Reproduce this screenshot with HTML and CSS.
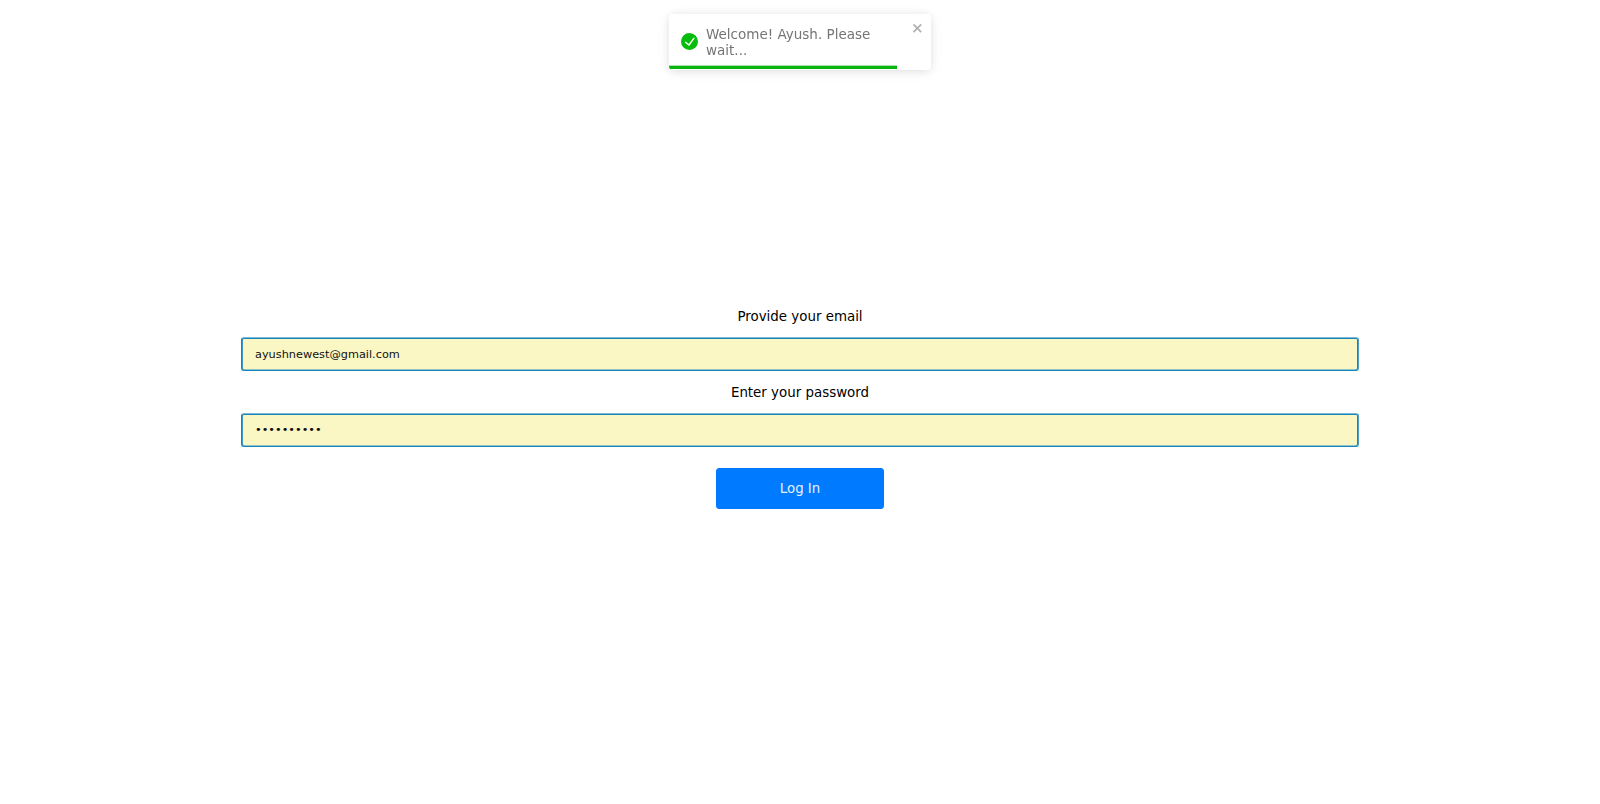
FILE: index.html
```html
<!DOCTYPE html>
<html lang="en">
<head>
<meta charset="utf-8">
<title>Log In</title>
<link rel="stylesheet" href="styles.css">
</head>
<body>
<div class="toast">
  <div class="toast-body">
    <svg class="toast-icon" viewBox="0 0 24 24" width="17" height="17"><path fill="#07bc0c" d="M12 0a12 12 0 1012 12A12.014 12.014 0 0012 0zm6.927 8.2l-6.845 9.289a1.011 1.011 0 01-1.43.188l-4.888-3.908a1 1 0 111.25-1.562l4.076 3.261 6.227-8.451a1 1 0 111.61 1.183z"/></svg>
    <div class="toast-text">Welcome! Ayush. Please wait...</div>
  </div>
  <svg class="toast-close" viewBox="0 0 14 16" width="12" height="14"><path fill="currentColor" fill-rule="evenodd" d="M7.71 8.23l3.75 3.75-1.48 1.48-3.75-3.75-3.75 3.75L1 11.98l3.75-3.75L1 4.48 2.48 3l3.75 3.75L9.98 3l1.48 1.48-3.75 3.75z"/></svg>
  <div class="toast-progress"></div>
</div>
<main class="page">
  <form class="login">
    <label class="field-label" for="email">Provide your email</label>
    <input class="field" id="email" type="text" value="ayushnewest@gmail.com">
    <label class="field-label" for="password">Enter your password</label>
    <input class="field field-secret" id="password" type="password" value="ayushnewes">
    <button class="submit" type="button">Log In</button>
  </form>
</main>
</body>
</html>
```
FILE: styles.css
```css
* { box-sizing: border-box; }
html, body { margin: 0; height: 100%; }
body { background: #fff; color: #000; font-family: "DejaVu Sans", sans-serif; }
.page { height: 804px; display: flex; align-items: center; justify-content: center; }
.login { width: 1120px; padding: 0 1px; display: flex; flex-direction: column; align-items: center; }
.field-label { font-size: 13.4px; line-height: 20px; margin: 12px 0 10px; }
.field { width: 100%; height: 34px; padding: 0 13px; border: 1px solid #1a85b8; border-top-color: #7db8d6; border-right-color: #4a9dc6; border-radius: 3px; box-shadow: inset 0 1px 0 #1a85b8, inset -1px 0 0 #1a85b8, inset 1px 0 0 #3d96c2, inset 0 -1px 0 #8fc2c6; background: #fbf7c4; color: #111; font-family: "DejaVu Sans", sans-serif; font-size: 11.3px; outline: none; }
.field-secret { padding-bottom: 1px; }
.submit { width: 168px; height: 41px; margin-top: 21px; border: 1px solid #007bff; border-radius: 3px; background: #007bff; color: #e6f1ff; font-family: "DejaVu Sans", sans-serif; font-size: 13.33px; }
.toast { position: fixed; top: 14px; left: 669px; width: 262px; height: 56px; background: #fff; border-radius: 4px; overflow: hidden; box-shadow: 0 1px 10px 0 rgba(0,0,0,.1), 0 2px 15px 0 rgba(0,0,0,.05); padding: 8px 7px 8px 8px; display: flex; justify-content: space-between; }
.toast-body { display: flex; align-items: center; padding: 5px 6px 6px 4px; width: 234px; }
.toast-icon { flex: none; margin-right: 8px; }
.toast-text { font-size: 13.5px; line-height: 16px; color: #757575; padding-top: 1px; }
.toast-close { color: #000; opacity: .3; flex: none; margin-top: -1px; }
.toast-progress { position: absolute; left: 0; bottom: 1px; width: 87%; height: 4px; background: #0ab50f; border-top: 1px solid #a6e3a8; }
```
